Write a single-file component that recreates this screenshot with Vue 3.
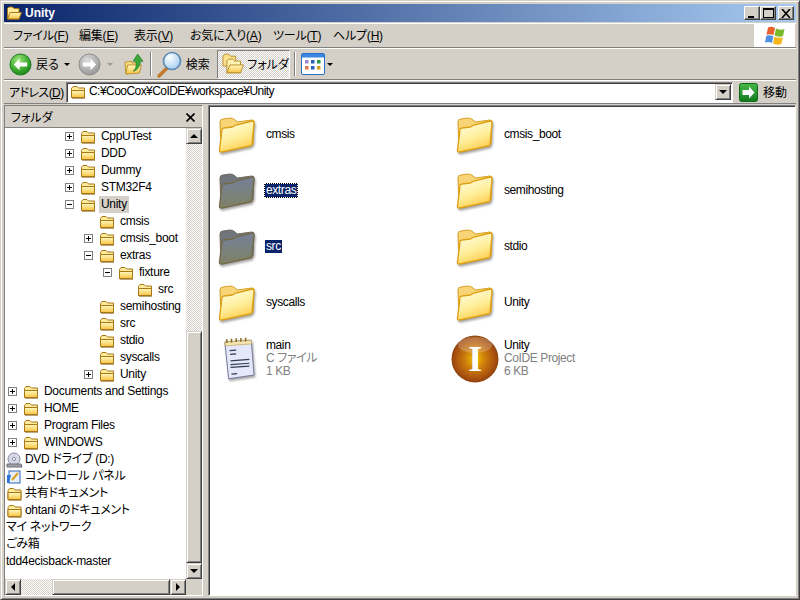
<template>
  <div class="window">
    <svg class="defs" width="0" height="0">
      <defs>
        <linearGradient id="fold" x1="0" y1="0" x2="0" y2="1">
          <stop offset="0" stop-color="#fff8c0" />
          <stop offset="1" stop-color="#f8c443" />
        </linearGradient>
        <linearGradient id="foldBig" x1="0.2" y1="0" x2="0.6" y2="1">
          <stop offset="0" stop-color="#fffde0" />
          <stop offset="0.55" stop-color="#ffef9c" />
          <stop offset="1" stop-color="#fdcb4a" />
        </linearGradient>
        <linearGradient id="foldSel" x1="0.4" y1="0" x2="0.5" y2="1">
          <stop offset="0" stop-color="#73809c" />
          <stop offset="1" stop-color="#7f8262" />
        </linearGradient>
        <radialGradient id="backGreen" cx="0.4" cy="0.3" r="0.8">
          <stop offset="0" stop-color="#a4e67c" />
          <stop offset="0.6" stop-color="#3aa82c" />
          <stop offset="1" stop-color="#157a1a" />
        </radialGradient>
        <radialGradient id="foreGray" cx="0.4" cy="0.3" r="0.8">
          <stop offset="0" stop-color="#dcdcdc" />
          <stop offset="1" stop-color="#8e8e8e" />
        </radialGradient>
        <radialGradient id="lens" cx="0.35" cy="0.3" r="0.8">
          <stop offset="0" stop-color="#ffffff" />
          <stop offset="1" stop-color="#9cc8f0" />
        </radialGradient>
        <radialGradient id="coide" cx="0.5" cy="0.5" r="0.5">
          <stop offset="0" stop-color="#f2c200" />
          <stop offset="0.45" stop-color="#cc7c0c" />
          <stop offset="0.85" stop-color="#a8500f" />
          <stop offset="1" stop-color="#8f4410" />
        </radialGradient>
        <linearGradient id="goGreen" x1="0" y1="0" x2="0" y2="1">
          <stop offset="0" stop-color="#48b848" />
          <stop offset="1" stop-color="#117a1c" />
        </linearGradient>
        <symbol id="folderSmall" viewBox="0 0 16 16">
          <path d="M1.5 13.5V4.5L3 2.5H7L8.5 4H14.5V13.5Z" fill="#ffeb9c" stroke="#a87818" />
          <path d="M1.5 13.5V6.5H14.5V13.5Z" fill="url(#fold)" stroke="#a87818" />
          <path d="M2 14.5H15" stroke="#8a6a2a" stroke-opacity=".6" />
        </symbol>
        <symbol id="folderBig" viewBox="0 0 38 37">
          <path d="M3 31 2 5Q2 2 5 2L12 1Q15 1 17 3L19 5 34 3Q36 3 36 5L35 27Z" fill="#f8d678" stroke="#d8a024" />
          <path d="M1.5 33 4 13Q4 11 6 11L14 10Q16 9 18 8L34 4Q36 4 36 6L34 27Q34 29 32 29L4 35Q1 35 1.5 33Z" fill="url(#foldBig)" stroke="#dc9f12" stroke-width="1.3" />
        </symbol>
        <symbol id="folderSel" viewBox="0 0 38 37">
          <path d="M3 31 2 5Q2 2 5 2L12 1Q15 1 17 3L19 5 34 3Q36 3 36 5L35 27Z" fill="#71757c" stroke="#6f6a5c" />
          <path d="M1.5 33 4 13Q4 11 6 11L14 10Q16 9 18 8L34 4Q36 4 36 6L34 27Q34 29 32 29L4 35Q1 35 1.5 33Z" fill="url(#foldSel)" stroke="#75694a" stroke-width="1.3" />
        </symbol>
        <symbol id="folderOpen" viewBox="0 0 16 16">
          <path d="M1.5 14V3.5L3 2H6.5L8 3.5H13V14Z" fill="#ffeb9c" stroke="#a87818" />
          <path d="M1.5 14 4 7.5H15.5L13 14Z" fill="url(#fold)" stroke="#a87818" />
        </symbol>
      </defs>
    </svg>

    <div class="titlebar">
      <svg class="title-icon" width="16" height="16"><use href="#folderOpen" /></svg>
      <span class="title-text">Unity</span>
      <div class="caption-btns">
        <button class="cap-btn"><span class="cap-min"></span></button>
        <button class="cap-btn"><span class="cap-max"></span></button>
        <button class="cap-btn cap-close">
          <svg width="10" height="9" viewBox="0 0 10 9"><path d="M1 0 9 9M9 0 1 9" stroke="#000" stroke-width="1.6" /></svg>
        </button>
      </div>
    </div>

    <div class="menubar">
      <div class="menu-items">
        <span v-for="m in menus" :key="m.label">{{ m.label }}(<u>{{ m.key }}</u>)</span>
      </div>
      <div class="flag">
        <svg width="22" height="20" viewBox="0 0 22 20">
          <path d="M4 1.5Q7.5 0 11 2L9.5 9Q6 7.5 2.5 8.7Z" fill="#e8602c" />
          <path d="M12 2.5Q16 4.5 20.5 3L19 10Q14.5 11.5 10.5 9.5Z" fill="#7cb82c" />
          <path d="M2.3 9.8Q6 8.7 9.3 10.2L8 17Q4.5 15.4 1 16.6Z" fill="#4b90e2" />
          <path d="M10.3 10.7Q14.5 12.7 18.8 11.2L17.3 18Q12.5 19.7 9 17.6Z" fill="#f5b81c" />
        </svg>
      </div>
    </div>

    <div class="toolbar">
      <svg class="tb-back" width="23" height="23" viewBox="0 0 24 24">
        <circle cx="12" cy="12" r="11" fill="url(#backGreen)" stroke="#1e7a24" />
        <path d="M11 6 5 12 11 18V14H19V10H11Z" fill="#fff" />
      </svg>
      <span class="tb-label back-label">戻る</span>
      <span class="arrow back-arrow"></span>
      <svg class="tb-fwd" width="23" height="23" viewBox="0 0 24 24">
        <circle cx="12" cy="12" r="11" fill="url(#foreGray)" stroke="#8a8a8a" />
        <path d="M13 6 19 12 13 18V14H5V10H13Z" fill="#fff" />
      </svg>
      <span class="arrow arrow-off"></span>
      <svg class="tb-up" width="20" height="24" viewBox="0 0 22 26">
        <path d="M2 24 1 11 8 10 9 12 17 11V22Z" fill="#f8dc84" stroke="#b98e2c" />
        <path d="M2 24 4 14H19L17 23Z" fill="url(#fold)" stroke="#b98e2c" />
        <path d="M10 21C13 19 14 15 13 10H10L15 2 21 10H18C18 15 15 20 10 21Z" fill="#3ca93a" stroke="#1d7a24" stroke-width=".7" />
      </svg>
      <span class="tb-sep sep-a"></span>
      <svg class="tb-search" width="26" height="28" viewBox="0 0 26 28">
        <path d="M10 18 2 26" stroke="#c47a2c" stroke-width="3.4" stroke-linecap="round" />
        <circle cx="15" cy="11" r="8.5" fill="url(#lens)" stroke="#5c88b4" stroke-width="1.6" />
      </svg>
      <span class="tb-label search-label">検索</span>
      <div class="tb-pressed">
        <svg width="23" height="22" viewBox="0 0 23 22">
          <path d="M1 13V3L3 1H7L9 3H14V13Z" fill="#fbe08e" stroke="#b98e2c" />
          <path d="M5 20V8L7 6H11L13 8H19V20Z" fill="#fff3b4" stroke="#b98e2c" />
          <path d="M5 20 8 12H22L19 20Z" fill="url(#fold)" stroke="#b98e2c" />
        </svg>
        <span class="tb-label">フォルダ</span>
      </div>
      <span class="tb-sep sep-b"></span>
      <svg class="tb-view" width="24" height="22" viewBox="0 0 24 22">
        <rect x=".5" y=".5" width="23" height="21" rx="1.5" fill="#fff" stroke="#2a6cc8" />
        <rect x="1" y="1" width="22" height="3.5" fill="#3a86e0" />
        <g v-for="d in viewDots" :key="d.x + '-' + d.y">
          <rect :x="d.x" :y="d.y" width="3.5" height="3.5" :fill="d.c" />
        </g>
      </svg>
      <span class="arrow view-arrow"></span>
    </div>

    <div class="addressbar">
      <span class="addr-label">アドレス(<u>D</u>)</span>
      <div class="addr-input">
        <svg width="16" height="16"><use href="#folderSmall" /></svg>
        <span class="addr-path">C:¥CooCox¥CoIDE¥workspace¥Unity</span>
        <button class="sb-btn addr-drop"><span class="tri-down"></span></button>
      </div>
      <svg class="go-icon" width="19" height="19" viewBox="0 0 19 19">
        <rect x=".5" y=".5" width="18" height="18" rx="2" fill="url(#goGreen)" stroke="#0d6a16" />
        <path d="M10 3.5 15.5 9.5 10 15.5V12H3.5V7H10Z" fill="#fff" />
      </svg>
      <span class="go-label">移動</span>
    </div>

    <div class="content">
      <div class="folder-pane">
        <div class="pane-head">
          <span class="head-label">フォルダ</span>
          <svg width="9" height="9" viewBox="0 0 9 9"><path d="M.5.5 8.5 8.5M8.5.5.5 8.5" stroke="#000" stroke-width="1.6" /></svg>
        </div>
        <div class="tree-wrap">
          <div class="tree">
            <div v-for="(row, i) in tree" :key="i" class="tree-row" :style="{ paddingLeft: rowPad(row) + 'px' }">
              <span v-if="row.exp" class="expander">
                <i class="h"></i><i v-if="row.exp === '+'" class="v"></i>
              </span>
              <svg v-if="row.icon === 'folder'" class="tree-icon" width="16" height="16"><use href="#folderSmall" /></svg>
              <svg v-else-if="row.icon === 'dvd'" class="root-icon" width="17" height="16" viewBox="0 0 17 16">
                <ellipse cx="8" cy="7" rx="6" ry="6" fill="#d6d8e8" stroke="#8a8ca0" />
                <circle cx="8" cy="7" r="1.6" fill="#fff" stroke="#8a8ca0" />
                <path d="M1 12H15L16 15H1Z" fill="#a0a0a8" stroke="#6c6c74" />
              </svg>
              <svg v-else-if="row.icon === 'panel'" class="root-icon" width="17" height="16" viewBox="0 0 17 16">
                <rect x="3" y="2" width="11" height="12" fill="#e8eef8" stroke="#2a66b8" />
                <path d="M6 11 12 4" stroke="#d8a020" stroke-width="2" />
                <path d="M1 6H5L3 14H1Z" fill="#2a76d8" />
              </svg>
              <svg v-else-if="row.icon === 'root'" class="root-icon" width="17" height="16"><use href="#folderSmall" /></svg>
              <span class="tree-label" :class="{ current: row.current, plain: !row.icon }">{{ row.name }}</span>
            </div>
          </div>
          <div class="vscroll">
            <button class="sb-btn"><span class="tri-up"></span></button>
            <div class="dither upper"></div>
            <div class="thumb"></div>
            <button class="sb-btn"><span class="tri-down"></span></button>
          </div>
          <div class="hscroll">
            <button class="sb-btn"><span class="tri-left"></span></button>
            <div class="dither left"></div>
            <div class="thumb"></div>
            <button class="sb-btn"><span class="tri-right"></span></button>
          </div>
          <div class="corner"></div>
        </div>
      </div>

      <div class="file-pane">
        <div v-for="t in tiles" :key="t.name + t.type" class="tile">
          <div class="tile-icon">
            <svg v-if="t.type === 'folder'" width="38" height="37" class="big-folder"><use :href="t.sel ? '#folderSel' : '#folderBig'" /></svg>
            <svg v-else-if="t.type === 'note'" width="32" height="44" viewBox="0 0 34 46" class="big-folder note">
              <path d="M2 5 30 3 33 40 6 44Z" fill="#e4e8fa" stroke="#6f7398" />
              <path d="M2 5 30 3 30.5 7 2.5 9Z" fill="#f4e4b0" stroke="#b89a4a" stroke-width=".6" />
              <path d="M4 6V2M9 5.5V1.5M14 5V1M19 4.7V.8M24 4.3V.5" stroke="#8b6a20" stroke-width="1.6" />
              <path d="M7 14 14 13.5M7.5 18 14 17.5M8 25 28 23.5M8 29 28 27.5M8 32 28 30.5M9 39 15 38.5" stroke="#333a55" stroke-width="1.3" />
            </svg>
            <svg v-else width="48" height="48" viewBox="0 0 48 48" class="coide">
              <circle cx="24" cy="24" r="23.5" fill="url(#coide)" />
              <ellipse cx="24" cy="10" rx="17" ry="8" fill="#fff" opacity=".22" />
              <text x="24" y="36" text-anchor="middle" class="coide-i">I</text>
            </svg>
          </div>
          <div class="tile-text">
            <span class="tile-name" :class="{ sel: t.sel, focus: t.focus }">{{ t.name }}</span>
            <span v-if="t.kind" class="tile-sub">{{ t.kind }}</span>
            <span v-if="t.size" class="tile-sub">{{ t.size }}</span>
          </div>
        </div>
      </div>
    </div>
  </div>
</template>

<script setup>
const menus = [
  { label: 'ファイル', key: 'F' },
  { label: '編集', key: 'E' },
  { label: '表示', key: 'V' },
  { label: 'お気に入り', key: 'A' },
  { label: 'ツール', key: 'T' },
  { label: 'ヘルプ', key: 'H' }
]

const viewDots = []
const dotColors = ['#9a8ad0', '#2a62c0', '#2a9a4a', '#e07a50', '#2a62c0', '#d8a020']
dotColors.forEach((c, i) => {
  viewDots.push({ x: 4 + (i % 3) * 6, y: 7 + Math.floor(i / 3) * 6, c })
})

const tree = [
  { name: 'CppUTest', level: 3, exp: '+', icon: 'folder' },
  { name: 'DDD', level: 3, exp: '+', icon: 'folder' },
  { name: 'Dummy', level: 3, exp: '+', icon: 'folder' },
  { name: 'STM32F4', level: 3, exp: '+', icon: 'folder' },
  { name: 'Unity', level: 3, exp: '-', icon: 'folder', current: true },
  { name: 'cmsis', level: 4, icon: 'folder' },
  { name: 'cmsis_boot', level: 4, exp: '+', icon: 'folder' },
  { name: 'extras', level: 4, exp: '-', icon: 'folder' },
  { name: 'fixture', level: 5, exp: '-', icon: 'folder' },
  { name: 'src', level: 6, icon: 'folder' },
  { name: 'semihosting', level: 4, icon: 'folder' },
  { name: 'src', level: 4, icon: 'folder' },
  { name: 'stdio', level: 4, icon: 'folder' },
  { name: 'syscalls', level: 4, icon: 'folder' },
  { name: 'Unity', level: 4, exp: '+', icon: 'folder' },
  { name: 'Documents and Settings', level: 0, exp: '+', icon: 'folder' },
  { name: 'HOME', level: 0, exp: '+', icon: 'folder' },
  { name: 'Program Files', level: 0, exp: '+', icon: 'folder' },
  { name: 'WINDOWS', level: 0, exp: '+', icon: 'folder' },
  { name: 'DVD ドライブ (D:)', icon: 'dvd' },
  { name: 'コントロール パネル', icon: 'panel' },
  { name: '共有ドキュメント', icon: 'root' },
  { name: 'ohtani のドキュメント', icon: 'root' },
  { name: 'マイ ネットワーク' },
  { name: 'ごみ箱' },
  { name: 'tdd4ecisback-master' }
]

const tiles = [
  { name: 'cmsis', type: 'folder' },
  { name: 'cmsis_boot', type: 'folder' },
  { name: 'extras', type: 'folder', sel: true, focus: true },
  { name: 'semihosting', type: 'folder' },
  { name: 'src', type: 'folder', sel: true },
  { name: 'stdio', type: 'folder' },
  { name: 'syscalls', type: 'folder' },
  { name: 'Unity', type: 'folder' },
  { name: 'main', type: 'note', kind: 'C ファイル', size: '1 KB' },
  { name: 'Unity', type: 'coide', kind: 'CoIDE Project', size: '6 KB' }
]

// rows without a level belong to the root and start right at the pane edge
function rowPad(row) {
  if (row.level === undefined) return 1
  return 3 + row.level * 19
}
</script>

<style>
html, body { margin: 0; background: #d4d0c8; }
</style>

<style scoped>
.window {
  width: 800px;
  height: 600px;
  box-sizing: border-box;
  border: 1px solid;
  border-color: #d4d0c8 #404040 #404040 #d4d0c8;
  box-shadow: inset 1px 1px #fff, inset -1px -1px #808080;
  padding: 3px;
  background: #d4d0c8;
  display: flex;
  flex-direction: column;
  overflow: hidden;
  font-family: "Liberation Sans", "Noto Sans CJK JP", sans-serif;
  font-size: 12px;
  font-feature-settings: "palt";
  color: #000;
}
.defs { flex: none; }
u { text-decoration: underline; }

.titlebar {
  height: 18px;
  flex: none;
  margin-bottom: 1px;
  display: flex;
  align-items: center;
  padding-left: 2px;
  background: linear-gradient(to right, #0a246a, #a6caf0);
  color: #fff;
}
.title-icon { flex: none; }
.title-text { margin-left: 3px; font-weight: bold; font-size: 12px; }
.caption-btns { margin-left: auto; display: flex; margin-right: 2px; }
.cap-btn {
  width: 16px;
  height: 14px;
  padding: 0;
  background: #d4d0c8;
  border: 1px solid;
  border-color: #fff #404040 #404040 #fff;
  box-shadow: inset -1px -1px #808080;
  display: flex;
  align-items: center;
  justify-content: center;
}
.cap-close { margin-left: 2px; }
.cap-min { width: 6px; height: 2px; background: #000; margin-top: 7px; margin-right: 3px; }
.cap-max { width: 9px; height: 7px; border: 1px solid #000; border-top-width: 2px; }

.menubar {
  height: 25px;
  flex: none;
  display: flex;
  border-top: 1px solid #fff;
  border-bottom: 1px solid #808080;
  box-shadow: 0 1px #fff;
  margin-bottom: 1px;
  box-sizing: border-box;
}
.menu-items {
  flex: 1;
  display: grid;
  grid-template-columns: 66px 55px 56px 83px 60px auto;
  align-items: center;
  padding: 0 0 2px 9px;
  letter-spacing: -.2px;
}
.flag {
  width: 41px;
  margin-right: 1px;
  background: #fff;
  display: flex;
  align-items: center;
  justify-content: center;
}

.toolbar {
  height: 31px;
  flex: none;
  display: flex;
  align-items: center;
  border-bottom: 1px solid #808080;
  box-shadow: 0 1px #fff;
  box-sizing: border-box;
  padding-left: 5px;
}
.tb-label { white-space: nowrap; margin-bottom: 2px; }
.back-label { margin-left: 4px; }
.arrow { width: 0; height: 0; border: 3px solid transparent; border-top: 3px solid #000; border-bottom: 0; }
.back-arrow { margin-left: 5px; margin-right: 8px; }
.arrow-off { border-top-color: #9a9a9a; margin-left: 6px; margin-right: 11px; }
.tb-sep { width: 0; height: 24px; border-left: 1px solid #808080; border-right: 1px solid #fff; }
.sep-a { margin-left: 6px; margin-right: 5px; }
.search-label { margin-left: 3px; }
.tb-pressed {
  width: 73px;
  height: 29px;
  margin-left: 7px;
  box-sizing: border-box;
  border: 1px solid;
  border-color: #808080 #fff #fff #808080;
  display: flex;
  align-items: center;
  gap: 3px;
  padding-left: 4px;
  background: repeating-conic-gradient(#fff 0 25%, #d4d0c8 0 50%) 0 0 / 2px 2px;
}
.sep-b { margin-left: 4px; margin-right: 5px; }
.view-arrow { margin-left: 2px; }

.addressbar {
  height: 24px;
  flex: none;
  display: flex;
  align-items: center;
  border-top: 1px solid #fff;
  border-bottom: 1px solid #808080;
  box-sizing: border-box;
  margin-bottom: 1px;
}
.addr-label { width: 62px; padding: 0 0 2px 5px; box-sizing: border-box; white-space: nowrap; letter-spacing: -.6px; }
.addr-input {
  width: 667px;
  height: 21px;
  box-sizing: border-box;
  border: 1px solid;
  border-color: #808080 #fff #fff #808080;
  box-shadow: inset 1px 1px #404040;
  background: #fff;
  display: flex;
  align-items: center;
  padding-left: 3px;
}
.addr-path { margin: 0 0 2px 3px; letter-spacing: -.55px; }
.addr-drop { margin-left: auto; margin-right: 1px; height: 17px; }
.go-icon { margin-left: 6px; flex: none; }
.go-label { margin: 0 0 2px 5px; }

.content {
  flex: 1;
  min-height: 0;
  display: flex;
  gap: 5px;
}
.folder-pane {
  width: 199px;
  flex: none;
  display: flex;
  flex-direction: column;
  box-sizing: border-box;
  border: 1px solid;
  border-color: #808080 #fff #fff #808080;
  padding-top: 1px;
}
.pane-head {
  height: 21px;
  flex: none;
  box-sizing: border-box;
  padding: 0 7px 0 6px;
  display: flex;
  align-items: center;
  justify-content: space-between;
  border-bottom: 1px solid #808080;
}
.head-label { margin-bottom: 2px; }
.tree-wrap {
  flex: 1;
  min-height: 0;
  background: #fff;
  display: grid;
  grid-template-columns: 1fr 16px;
  grid-template-rows: 1fr 16px;
}
.tree { overflow: hidden; letter-spacing: -.3px; }
.tree-row {
  height: 17px;
  display: flex;
  align-items: center;
  white-space: nowrap;
}
.expander {
  width: 9px;
  height: 9px;
  box-sizing: border-box;
  border: 1px solid #808080;
  flex: none;
  position: relative;
  margin-right: 6px;
  background: #fff;
}
.expander .h { position: absolute; left: 1px; top: 3px; width: 5px; height: 1px; background: #000; }
.expander .v { position: absolute; left: 3px; top: 1px; width: 1px; height: 5px; background: #000; }
.tree-row:not(:has(.expander)) .tree-icon { margin-left: 15px; }
.tree-icon { flex: none; margin-right: 3px; }
.root-icon { flex: none; margin-right: 0; }
.tree-label { padding: 0 2px; line-height: 17px; }
.tree-label.plain { padding-left: 0; }
.tree-label.current { background: #d4d0c8; }

.vscroll, .hscroll { display: flex; background: #d4d0c8; }
.vscroll { flex-direction: column; }
.sb-btn {
  width: 16px;
  height: 16px;
  padding: 0;
  flex: none;
  background: #d4d0c8;
  border: 1px solid;
  border-color: #d4d0c8 #404040 #404040 #d4d0c8;
  box-shadow: inset 1px 1px #fff, inset -1px -1px #808080;
  display: flex;
  align-items: center;
  justify-content: center;
}
.dither { background: repeating-conic-gradient(#fff 0 25%, #d4d0c8 0 50%) 0 0 / 2px 2px; flex: none; }
.dither.upper { height: 187px; }
.dither.left { width: 31px; }
.thumb {
  flex: 1;
  background: #d4d0c8;
  border: 1px solid;
  border-color: #d4d0c8 #404040 #404040 #d4d0c8;
  box-shadow: inset 1px 1px #fff, inset -1px -1px #808080;
}
.corner { background: #d4d0c8; }
.tri-up, .tri-down, .tri-left, .tri-right { width: 0; height: 0; border: 4px solid transparent; }
.tri-up { border-bottom-color: #000; border-top: 0; }
.tri-down { border-top-color: #000; border-bottom: 0; }
.tri-left { border-right-color: #000; border-left: 0; }
.tri-right { border-left-color: #000; border-right: 0; }

.file-pane {
  flex: 1;
  min-width: 0;
  background: #fff;
  box-sizing: border-box;
  border: 1px solid;
  border-color: #808080 #fff #fff #808080;
  box-shadow: inset 1px 1px #404040;
  padding: 5px 0 0 4px;
  display: grid;
  grid-template-columns: 238px 238px;
  grid-auto-rows: 56px;
  align-content: start;
  letter-spacing: -.4px;
}
.tile { display: flex; align-items: center; height: 48px; }
.tile-icon { width: 48px; height: 48px; flex: none; display: flex; align-items: center; justify-content: center; margin-right: 4px; }
.big-folder { filter: drop-shadow(1px 2px 1px rgba(0, 0, 0, .35)); }
.note { margin-left: 4px; }
.coide-i { font-family: "Liberation Serif", serif; font-weight: bold; font-size: 36px; fill: #fff; }
.tile-text { display: flex; flex-direction: column; align-items: flex-start; line-height: 13px; margin-bottom: 2px; }
.tile-name { padding: 0 1px; }
.tile-name.sel { background: #0a246a; color: #fff; }
.tile-name.focus { outline: 1px dotted #fff; box-shadow: 0 0 0 1px #000; }
.tile-sub { color: #808080; padding: 0 1px; }
</style>
